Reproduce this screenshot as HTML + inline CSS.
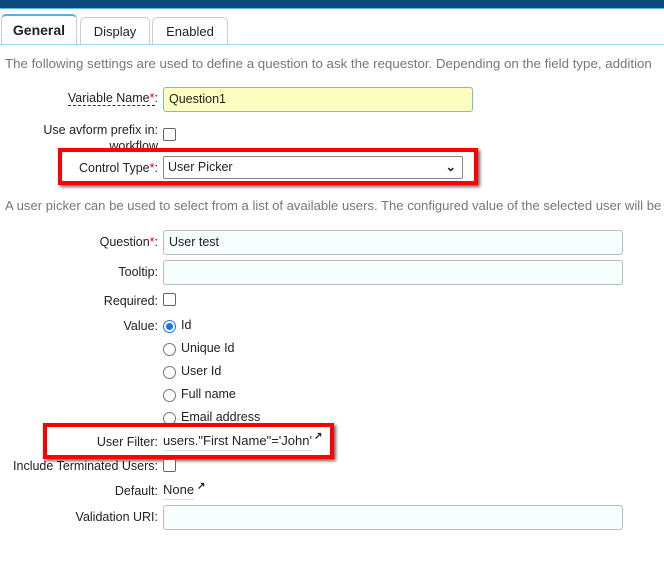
<!DOCTYPE html>
<html><head><style>
body{margin:0;width:664px;height:561px;overflow:hidden;background:#fff;font-family:"Liberation Sans",sans-serif;font-size:12.5px;color:#222;position:relative}
.a{position:absolute;white-space:nowrap}
.lbl{position:absolute;right:506px;white-space:nowrap;text-align:right}
.star{color:#e00}
.inp{position:absolute;border:1px solid #bbb;border-radius:3px;background:#f5fdfd;box-sizing:border-box;padding:0 5px;white-space:nowrap;line-height:23px}
.cb{position:absolute;width:11px;height:11px;border:1px solid #666;border-radius:2px;background:#fff}
.rd{position:absolute;width:11px;height:11px;border:1px solid #777;border-radius:50%;background:#fff}
.tab{position:absolute;top:17px;height:27px;border:1px solid #ccc;border-bottom:none;border-radius:5px 5px 0 0;background:#fff;text-align:center;line-height:28px;font-size:13px}
.red{position:absolute;border:4px solid #f00;box-shadow:2px 2px 3px rgba(0,0,0,.6);box-sizing:border-box}
</style></head><body>
<div class="a" style="left:0;top:0;width:664px;height:8px;background:#0b4a7c"></div>
<div class="a" style="left:0;top:8px;width:664px;height:1px;background:#5bb8d8"></div>
<div class="tab" style="left:1px;top:14px;width:74px;height:30px;border-top:2px solid #5aaee0;font-weight:bold;font-size:14px;line-height:28px">General</div>
<div class="tab" style="left:80px;width:68px">Display</div>
<div class="tab" style="left:152px;width:74px">Enabled</div>
<div class="a" style="left:0;top:44px;width:664px;height:1px;background:#a9d6f0"></div>
<div class="a" style="left:5px;top:56px;color:#777;font-size:13.3px">The following settings are used to define a question to ask the requestor. Depending on the field type, addition</div>

<div class="lbl" style="top:91px"><span style="border-bottom:1px dashed #333">Variable Name<span class="star">*</span></span>:</div>
<div class="inp" style="left:163px;top:87px;width:310px;height:25px;background:#fdfdc0;border-color:#7ab8e8">Question1</div>
<div class="lbl" style="top:122px;line-height:16px">Use avform prefix in:<br>workflow</div>
<div class="cb" style="left:163px;top:128px"></div>

<div class="red" style="left:58px;top:148px;width:420px;height:37px"></div>
<div class="lbl" style="top:161px">Control Type<span class="star">*</span>:</div>
<div class="inp" style="left:163px;top:156px;width:300px;height:23px;background:#fff;border-color:#888;border-radius:2px;padding:0 4px;line-height:21px">User Picker<span style="position:absolute;right:6px;top:0;font-weight:bold">&#8964;</span></div>

<div class="a" style="left:5px;top:198px;color:#777;font-size:13.1px">A user picker can be used to select from a list of available users. The configured value of the selected user will be</div>

<div class="lbl" style="top:235px">Question<span class="star">*</span>:</div>
<div class="inp" style="left:163px;top:230px;width:460px;height:25px">User test</div>
<div class="lbl" style="top:265px">Tooltip:</div>
<div class="inp" style="left:163px;top:260px;width:460px;height:25px"></div>
<div class="lbl" style="top:294px">Required:</div>
<div class="cb" style="left:163px;top:293px"></div>
<div class="lbl" style="top:319px">Value:</div>
<div class="rd" style="left:163px;top:320px;border-color:#1a73e8"><div style="position:absolute;left:2px;top:2px;width:7px;height:7px;border-radius:50%;background:#1a73e8"></div></div>
<div class="a" style="left:181px;top:318px">Id</div>
<div class="rd" style="left:163px;top:343px"></div><div class="a" style="left:181px;top:341px">Unique Id</div>
<div class="rd" style="left:163px;top:366px"></div><div class="a" style="left:181px;top:364px">User Id</div>
<div class="rd" style="left:163px;top:389px"></div><div class="a" style="left:181px;top:387px">Full name</div>
<div class="rd" style="left:163px;top:412px"></div><div class="a" style="left:181px;top:410px">Email address</div>

<div class="red" style="left:43px;top:423px;width:291px;height:36px"></div>
<div class="lbl" style="top:435px">User Filter:</div>
<div class="a" style="left:163px;top:433px;border-bottom:1px solid #ddd;padding-bottom:2px;font-size:13px">users."First Name"='John'</div>
<div class="a" style="left:314px;top:431px;font-size:10px;font-weight:bold">&#8599;</div>
<div class="lbl" style="top:459px">Include Terminated Users:</div>
<div class="cb" style="left:163px;top:459px"></div>
<div class="lbl" style="top:484px">Default:</div>
<div class="a" style="left:163px;top:482px;border-bottom:1px solid #ddd;padding-bottom:2px;font-size:13px">None</div>
<div class="a" style="left:197px;top:481px;font-size:10px;font-weight:bold">&#8599;</div>
<div class="lbl" style="top:510px">Validation URI:</div>
<div class="inp" style="left:163px;top:505px;width:460px;height:25px"></div>
</body></html>
